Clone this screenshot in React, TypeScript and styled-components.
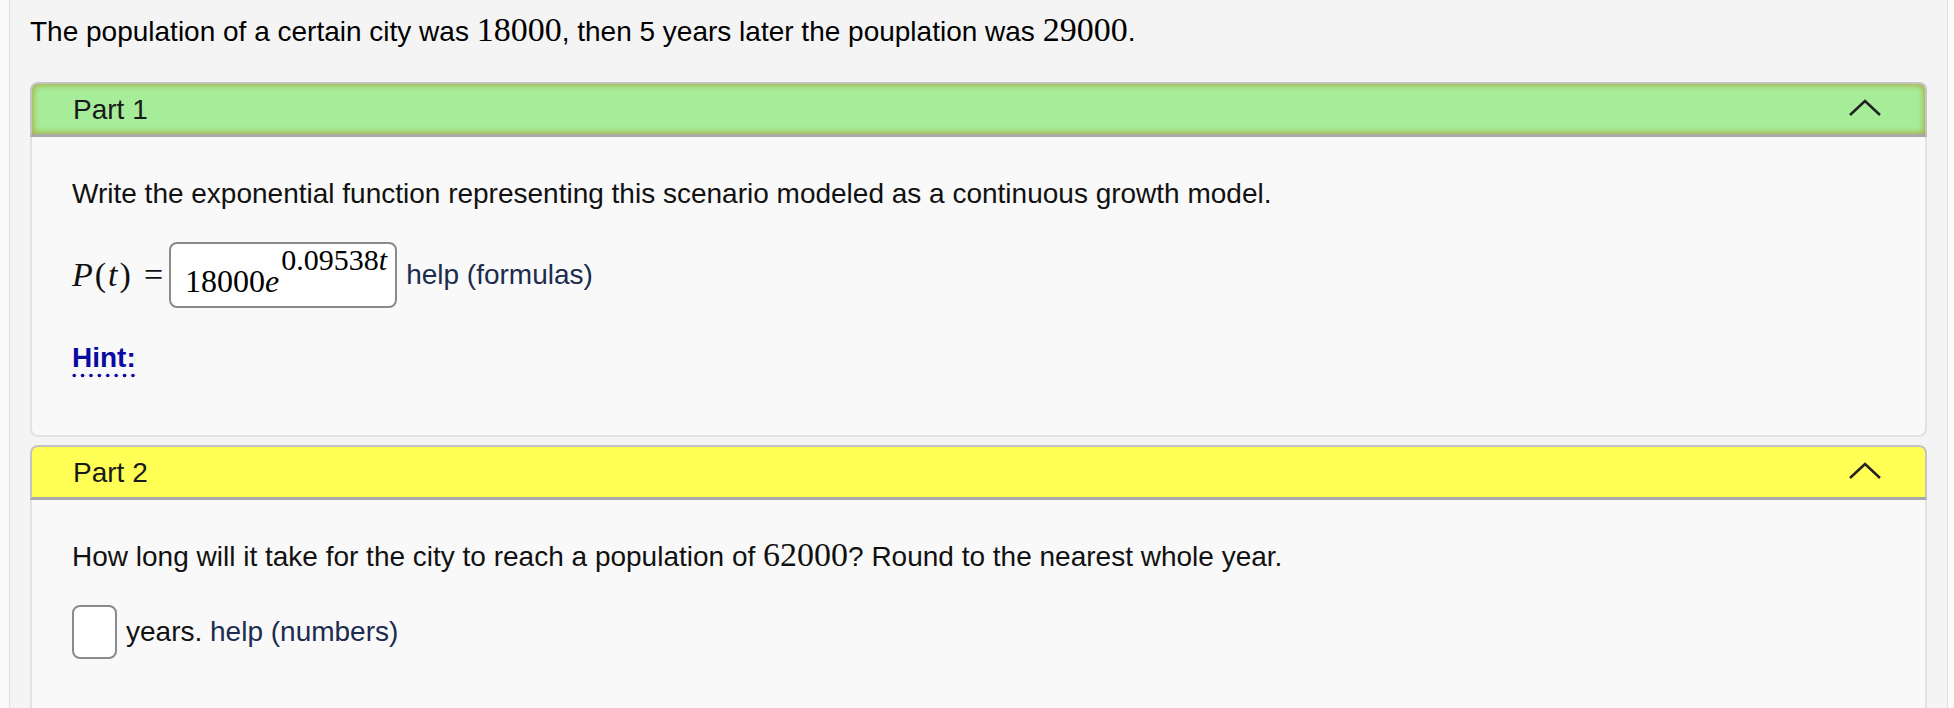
import styled, { createGlobalStyle } from 'styled-components';

const GlobalStyle = createGlobalStyle`
  body {
    margin: 0;
    background: #fafafa;
    font-family: 'Liberation Sans', Arial, sans-serif;
    color: #111;
  }
`;

type Tone = 'correct' | 'pending';

const Page = styled.main`
  box-sizing: border-box;
  width: 1939px;
  min-height: 708px;
  margin-left: 9px;
  padding: 12px 20px 0;
  background: #f4f4f4;
  border-left: 1px solid #e0e0e0;
  border-right: 1px solid #e0e0e0;
`;

const Statement = styled.p`
  margin: 0 0 30px;
  font-size: 28px;
  line-height: 40px;
  color: #000;
`;

const Num = styled.span`
  font-family: 'Liberation Serif', 'Times New Roman', serif;
  font-size: 34px;
  line-height: 30px;
`;

const Panel = styled.section`
  margin-bottom: 8px;
`;

const Header = styled.div<{ $tone: Tone }>`
  box-sizing: border-box;
  height: 55px;
  display: flex;
  align-items: center;
  justify-content: space-between;
  padding: 2px 44px 0 41px;
  font-size: 28px;
  line-height: 40px;
  color: #1a1a1a;
  border: 2px solid #c4c4c4;
  border-bottom: 3px solid #a9a9a9;
  border-radius: 8px 8px 0 0;
  background: ${(p) => (p.$tone === 'correct' ? '#a6ec99' : '#ffff55')};
  box-shadow: ${(p) =>
    p.$tone === 'correct' ? 'inset 0 0 6px 1px #aba43a' : 'none'};
`;

const Chevron = styled.svg`
  width: 32px;
  height: 17px;
  margin-top: -6px;
  polyline {
    fill: none;
    stroke: #222;
    stroke-width: 2.5;
  }
`;

const Body = styled.div<{ $open?: boolean }>`
  padding: 37px 40px ${(p) => (p.$open ? '60px' : '57px')};
  background: #f9f9f9;
  border: 2px solid #e2e2e2;
  border-top: none;
  border-radius: 0 0 8px 8px;
  font-size: 28px;
  line-height: 40px;
`;

const Text = styled.p`
  margin: 0 0 28px;
`;

const AnswerRow = styled.div`
  display: flex;
  align-items: center;
  margin-bottom: 30px;
`;

const MathLabel = styled.span`
  font-family: 'Liberation Serif', 'Times New Roman', serif;
  font-size: 34px;
  letter-spacing: 2px;
  margin-right: 4px;
  i {
    font-style: italic;
  }
  .eq {
    margin-left: 11px;
  }
`;

const AnswerBox = styled.div<{ $small?: boolean }>`
  box-sizing: border-box;
  display: flex;
  align-items: flex-end;
  height: ${(p) => (p.$small ? '54px' : '66px')};
  width: ${(p) => (p.$small ? '45px' : 'auto')};
  padding: ${(p) => (p.$small ? '0' : '0 8px 9px 14px')};
  margin-right: 9px;
  background: #fff;
  border: 2px solid #8a8a8a;
  border-radius: 8px;
`;

const Expr = styled.span`
  font-family: 'Liberation Serif', 'Times New Roman', serif;
  font-size: 32px;
  line-height: 32px;
  color: #000;
  i {
    font-style: italic;
  }
`;

const Sup = styled.span`
  font-size: 30px;
  line-height: 26px;
  vertical-align: 22px;
  margin-left: 2px;
`;

const HelpLink = styled.a`
  color: #1c2b4e;
  text-decoration: none;
`;

const HintLink = styled.a`
  display: inline-block;
  font-weight: bold;
  color: #0a0aa3;
  line-height: 31px;
  padding-bottom: 5px;
  text-decoration: none;
  background-image: radial-gradient(circle, #0a0aa3 1.6px, transparent 2.1px);
  background-size: 8.4px 5px;
  background-repeat: repeat-x;
  background-position: -2px bottom;
`;

const PartHeader = ({ label, tone }: { label: string; tone: Tone }) => (
  <Header $tone={tone}>
    <span>{label}</span>
    <Chevron viewBox="0 0 32 17">
      <polyline points="1,16 16,2 31,16" />
    </Chevron>
  </Header>
);

export default function App() {
  return (
    <>
      <GlobalStyle />
      <Page>
        <Statement>
          The population of a certain city was <Num>18000</Num>, then 5 years
          later the pouplation was <Num>29000</Num>.
        </Statement>

        <Panel>
          <PartHeader label="Part 1" tone="correct" />
          <Body>
            <Text>
              Write the exponential function representing this scenario modeled
              as a continuous growth model.
            </Text>
            <AnswerRow>
              <MathLabel>
                <i>P</i>(<i>t</i>)<span className="eq">=</span>
              </MathLabel>
              <AnswerBox>
                <Expr>
                  18000<i>e</i>
                  <Sup>
                    0.09538<i>t</i>
                  </Sup>
                </Expr>
              </AnswerBox>
              <HelpLink href="#">help (formulas)</HelpLink>
            </AnswerRow>
            <HintLink href="#">Hint:</HintLink>
          </Body>
        </Panel>

        <Panel>
          <PartHeader label="Part 2" tone="pending" />
          <Body $open>
            <Text>
              How long will it take for the city to reach a population of{' '}
              <Num>62000</Num>? Round to the nearest whole year.
            </Text>
            <AnswerRow>
              <AnswerBox $small />
              <span>
                years. <HelpLink href="#">help (numbers)</HelpLink>
              </span>
            </AnswerRow>
          </Body>
        </Panel>
      </Page>
    </>
  );
}
